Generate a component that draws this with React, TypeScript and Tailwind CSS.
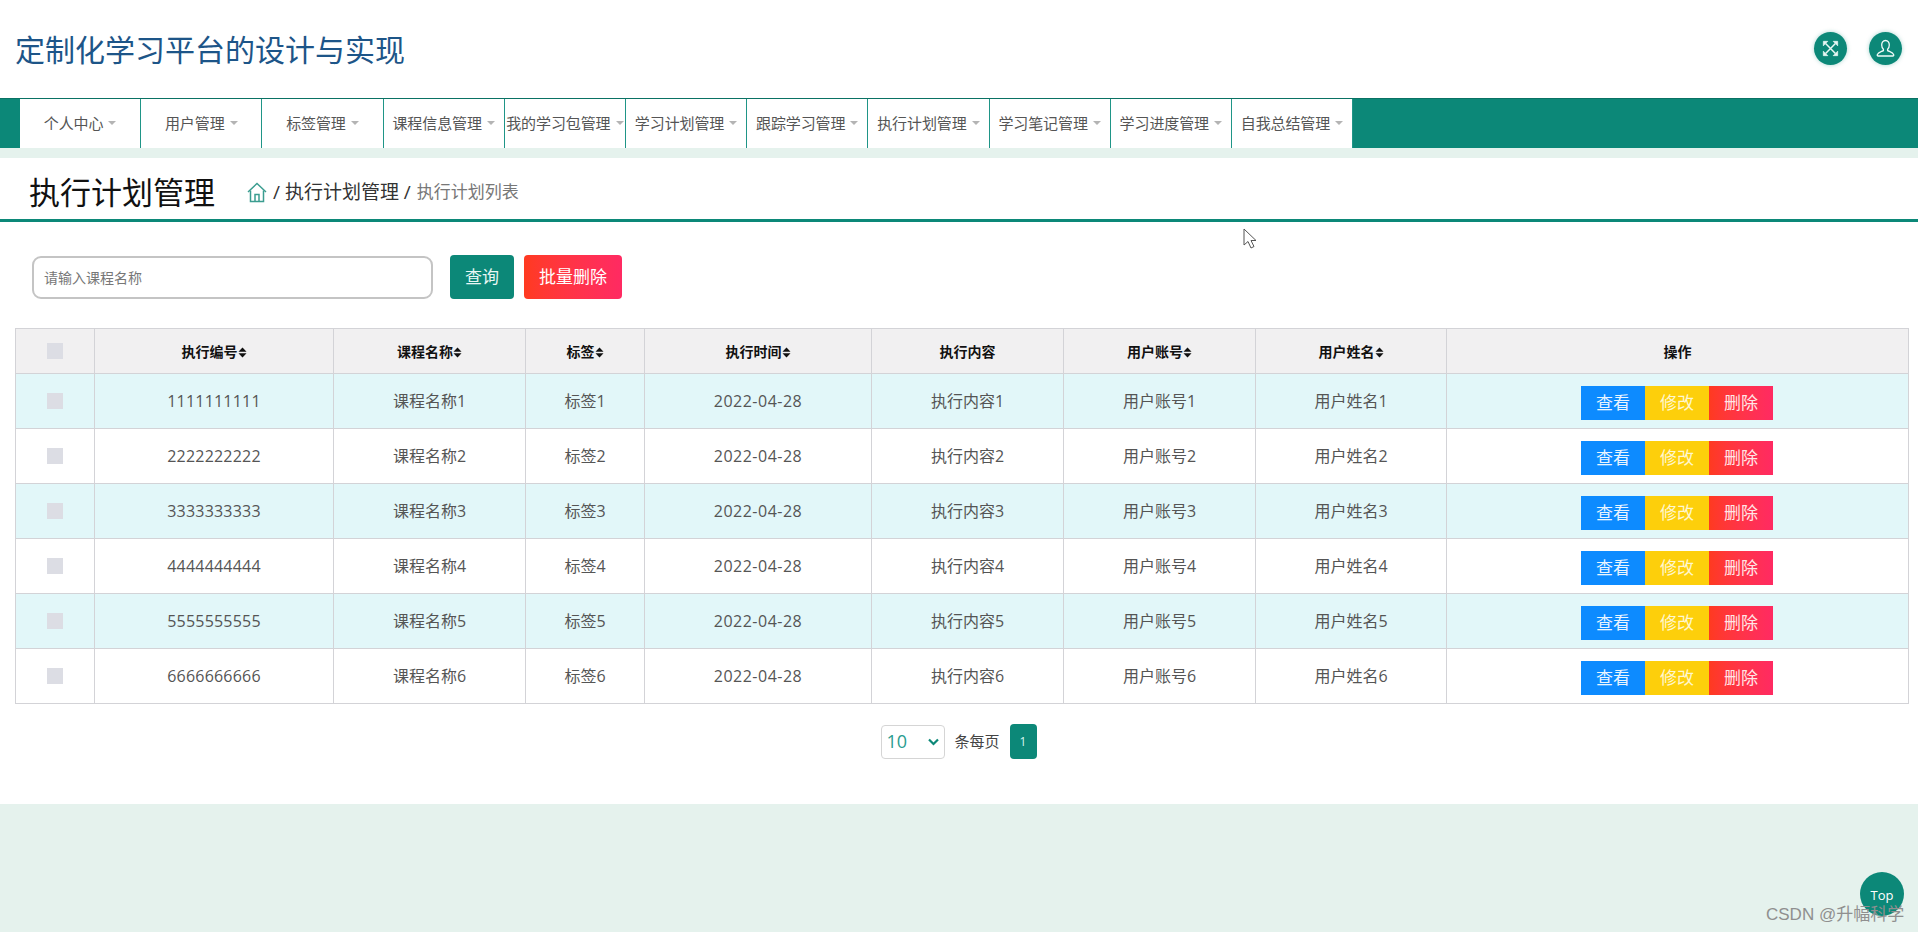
import React from "react";

const NAV = ["个人中心","用户管理","标签管理","课程信息管理","我的学习包管理","学习计划管理","跟踪学习管理","执行计划管理","学习笔记管理","学习进度管理","自我总结管理"];
const HEAD: [string, boolean][] = [["执行编号",true],["课程名称",true],["标签",true],["执行时间",true],["执行内容",false],["用户账号",true],["用户姓名",true]];
const ROWS = [1,2,3,4,5,6];

function SortIcon() {
  return (
    <svg width="9" height="11" viewBox="0 0 9 11" className="inline-block align-[-1px]" fill="#111">
      <path d="M4.5 0.5 L8.5 4.8 H0.5 Z" />
      <path d="M4.5 10.5 L0.5 6.2 H8.5 Z" />
    </svg>
  );
}

function RoundIcon({ children }: { children: React.ReactNode }) {
  return (
    <div className="flex h-[33px] w-[33px] items-center justify-center rounded-full bg-[#0c8878] shadow-[0_0_4px_rgba(12,136,120,0.35)]">
      {children}
    </div>
  );
}

export default function App() {
  return (
    <div className="relative min-h-screen bg-[#e5f2ed] font-['Open_Sans','Noto_Sans_CJK_SC',sans-serif] text-[#555]">
      <header className="flex h-[98px] items-center justify-between bg-white pl-[15px] pr-[16px]">
        <h1 className="text-[30px] font-normal text-[#1d5588]">定制化学习平台的设计与实现</h1>
        <div className="flex gap-[22px] pb-[2px]">
          <RoundIcon>
            <svg width="17" height="17" viewBox="0 0 19 19" fill="none" stroke="#e8f7f4" strokeWidth="1.7">
              <path d="M4 4 L15 15 M15 4 L4 15" />
              <path d="M1.5 6.5 V1.5 H6.5 Z M12.5 1.5 H17.5 V6.5 Z M17.5 12.5 V17.5 H12.5 Z M6.5 17.5 H1.5 V12.5 Z" fill="#e8f7f4" strokeWidth="0.8" />
            </svg>
          </RoundIcon>
          <RoundIcon>
            <svg width="19" height="19" viewBox="0 0 19 19" fill="none" stroke="#f0faf8" strokeWidth="1.3">
              <path d="M9.5 1.5 C6.9 1.5 5.7 3.6 5.7 6 C5.7 8 6.5 9.4 7.4 10.2 V11.6 C5.4 12.7 2 13.4 1.3 15.6 C1.1 16.4 1.4 17 2.2 17 H16.8 C17.6 17 17.9 16.4 17.7 15.6 C17 13.4 13.6 12.7 11.6 11.6 V10.2 C12.5 9.4 13.3 8 13.3 6 C13.3 3.6 12.1 1.5 9.5 1.5 Z" />
            </svg>
          </RoundIcon>
        </div>
      </header>

      <nav className="flex h-[50px] border-t border-[#0a7264] bg-[#0c8878] pl-[20px]">
        {NAV.map((n) => (
          <div key={n} className="flex w-[121.2px] items-center justify-center gap-[5px] whitespace-nowrap border-r border-[#1f9587] bg-white text-[15px] leading-none tracking-[-0.1px] text-[#555]">
            <span>{n}</span>
            <span className="mb-[2px] h-0 w-0 border-x-[4px] border-t-[4px] border-x-transparent border-t-[#b4b4b4]" />
          </div>
        ))}
      </nav>

      <main className="mt-[10px] h-[646px] bg-white">
        <div className="flex h-[64px] items-center border-b-[3px] border-[#0c8878] pl-[29px] pt-[7px]">
          <h2 className="text-[31px] font-normal leading-none text-[#111]">执行计划管理</h2>
          <svg className="ml-[32px]" width="20" height="21" viewBox="0 0 20 21" fill="none" stroke="#3b9d90" strokeWidth="1.5">
            <path d="M1 10 L10 1.5 L19 10" />
            <path d="M3.5 8.5 V19.5 H16.5 V8.5" />
            <path d="M8 19.5 V12.5 H12 V19.5" />
          </svg>
          <span className="ml-[6px] text-[19px] text-[#333]">/ 执行计划管理 /</span>
          <span className="ml-[6px] text-[17px] text-[#777]">执行计划列表</span>
        </div>

        <div className="flex items-center pl-[32px] pt-[33px]">
          <div className="flex h-[43px] w-[401px] items-center rounded-[9px] border-2 border-[#c4c4c4] bg-white pl-[10px] text-[14px] text-[#777]">请输入课程名称</div>
          <button className="ml-[17px] h-[44px] w-[64px] rounded-[4px] bg-[#0c8878] text-[17px] text-[#e8f7f4]">查询</button>
          <button className="ml-[10px] h-[44px] w-[98px] rounded-[4px] bg-gradient-to-r from-[#ff3a1f] to-[#ff2a62] text-[17px] text-white">批量删除</button>
        </div>

        <div className="pl-[15px] pr-[9px] pt-[29px]">
          <table className="w-full table-fixed border-collapse border border-[#cfcfd3]">
            <colgroup>
              <col className="w-[79px]" />
              <col className="w-[239px]" />
              <col className="w-[192px]" />
              <col className="w-[119px]" />
              <col className="w-[227px]" />
              <col className="w-[192px]" />
              <col className="w-[192px]" />
              <col className="w-[191px]" />
              <col />
            </colgroup>
            <thead>
              <tr className="h-[45px] bg-[#f1f0f1]">
                <th className="border border-[#d3d3d7]">
                  <span className="mx-auto block h-[16px] w-[16px] bg-[#dcdde4]" />
                </th>
                {HEAD.map(([h, s]) => (
                  <th key={h} className="border border-[#d3d3d7] text-[14px] font-bold text-[#111]">
                    {h}
                    {s && <SortIcon />}
                  </th>
                ))}
                <th className="border border-[#d3d3d7] text-[14px] font-bold text-[#111]">操作</th>
              </tr>
            </thead>
            <tbody>
              {ROWS.map((i) => (
                <tr key={i} className={i % 2 ? "h-[55px] bg-[#e2f7f9]" : "h-[55px] bg-white"}>
                  <td className="border border-[#d3d3d7]">
                    <span className="mx-auto block h-[16px] w-[16px] bg-[#dcdde4]" />
                  </td>
                  <td className="border border-[#d3d3d7] text-center text-[16px] tracking-[0.2px]">{String(i).repeat(10)}</td>
                  <td className="border border-[#d3d3d7] text-center text-[16px]">课程名称{i}</td>
                  <td className="border border-[#d3d3d7] text-center text-[16px]">标签{i}</td>
                  <td className="border border-[#d3d3d7] text-center text-[16px] tracking-[0.5px]">2022-04-28</td>
                  <td className="border border-[#d3d3d7] text-center text-[16px]">执行内容{i}</td>
                  <td className="border border-[#d3d3d7] text-center text-[16px]">用户账号{i}</td>
                  <td className="border border-[#d3d3d7] text-center text-[16px]">用户姓名{i}</td>
                  <td className="border border-[#d3d3d7] text-center">
                    <div className="flex justify-center pr-[1px] pt-[4px]">
                      <button className="h-[34px] w-[64px] bg-[#0d8bff] text-[17px] text-[#eaf5ff]">查看</button>
                      <button className="h-[34px] w-[64px] bg-[#fdcf0b] text-[17px] text-[#fff7d0]">修改</button>
                      <button className="h-[34px] w-[64px] bg-gradient-to-r from-[#ff3a1f] to-[#ff2a62] text-[17px] text-[#ffe6e6]">删除</button>
                    </div>
                  </td>
                </tr>
              ))}
            </tbody>
          </table>
        </div>

        <div className="flex items-center justify-center pt-[20px]">
          <div className="flex h-[34px] w-[64px] items-center justify-between rounded-[4px] border border-[#d5d5d5] pl-[4px] pr-[5px] text-[18px] text-[#2a9d8f]">
            <span>10</span>
            <svg width="11" height="8" viewBox="0 0 11 8" fill="none" stroke="#0c8878" strokeWidth="2.2"><path d="M1 1.5 L5.5 6 L10 1.5" /></svg>
          </div>
          <span className="ml-[9px] text-[15px] text-[#444]">条每页</span>
          <div className="ml-[10px] flex h-[35px] w-[27px] items-center justify-center rounded-[4px] bg-[#0c8878] text-[12px] text-[#d8f7f0]">1</div>
        </div>
      </main>

      <div className="absolute left-[1860px] top-[872px] flex h-[44px] w-[44px] items-center justify-center rounded-full bg-[#0c8878] pt-[3px] text-[13px] text-white">Top</div>
      <div className="absolute left-[1766px] top-[905px] whitespace-nowrap font-['Liberation_Sans','Noto_Sans_CJK_SC',sans-serif] text-[17px] leading-[20px] text-[#8f8f8f]">CSDN @升幅科学</div>
      <svg className="absolute left-[1243px] top-[228px]" width="15" height="22" viewBox="0 0 15 22" fill="white" stroke="#555" strokeWidth="1">
        <path d="M1 1 V17 L5 13.5 L8 20 L11 18.5 L8 12.5 H13 Z" />
      </svg>
    </div>
  );
}
